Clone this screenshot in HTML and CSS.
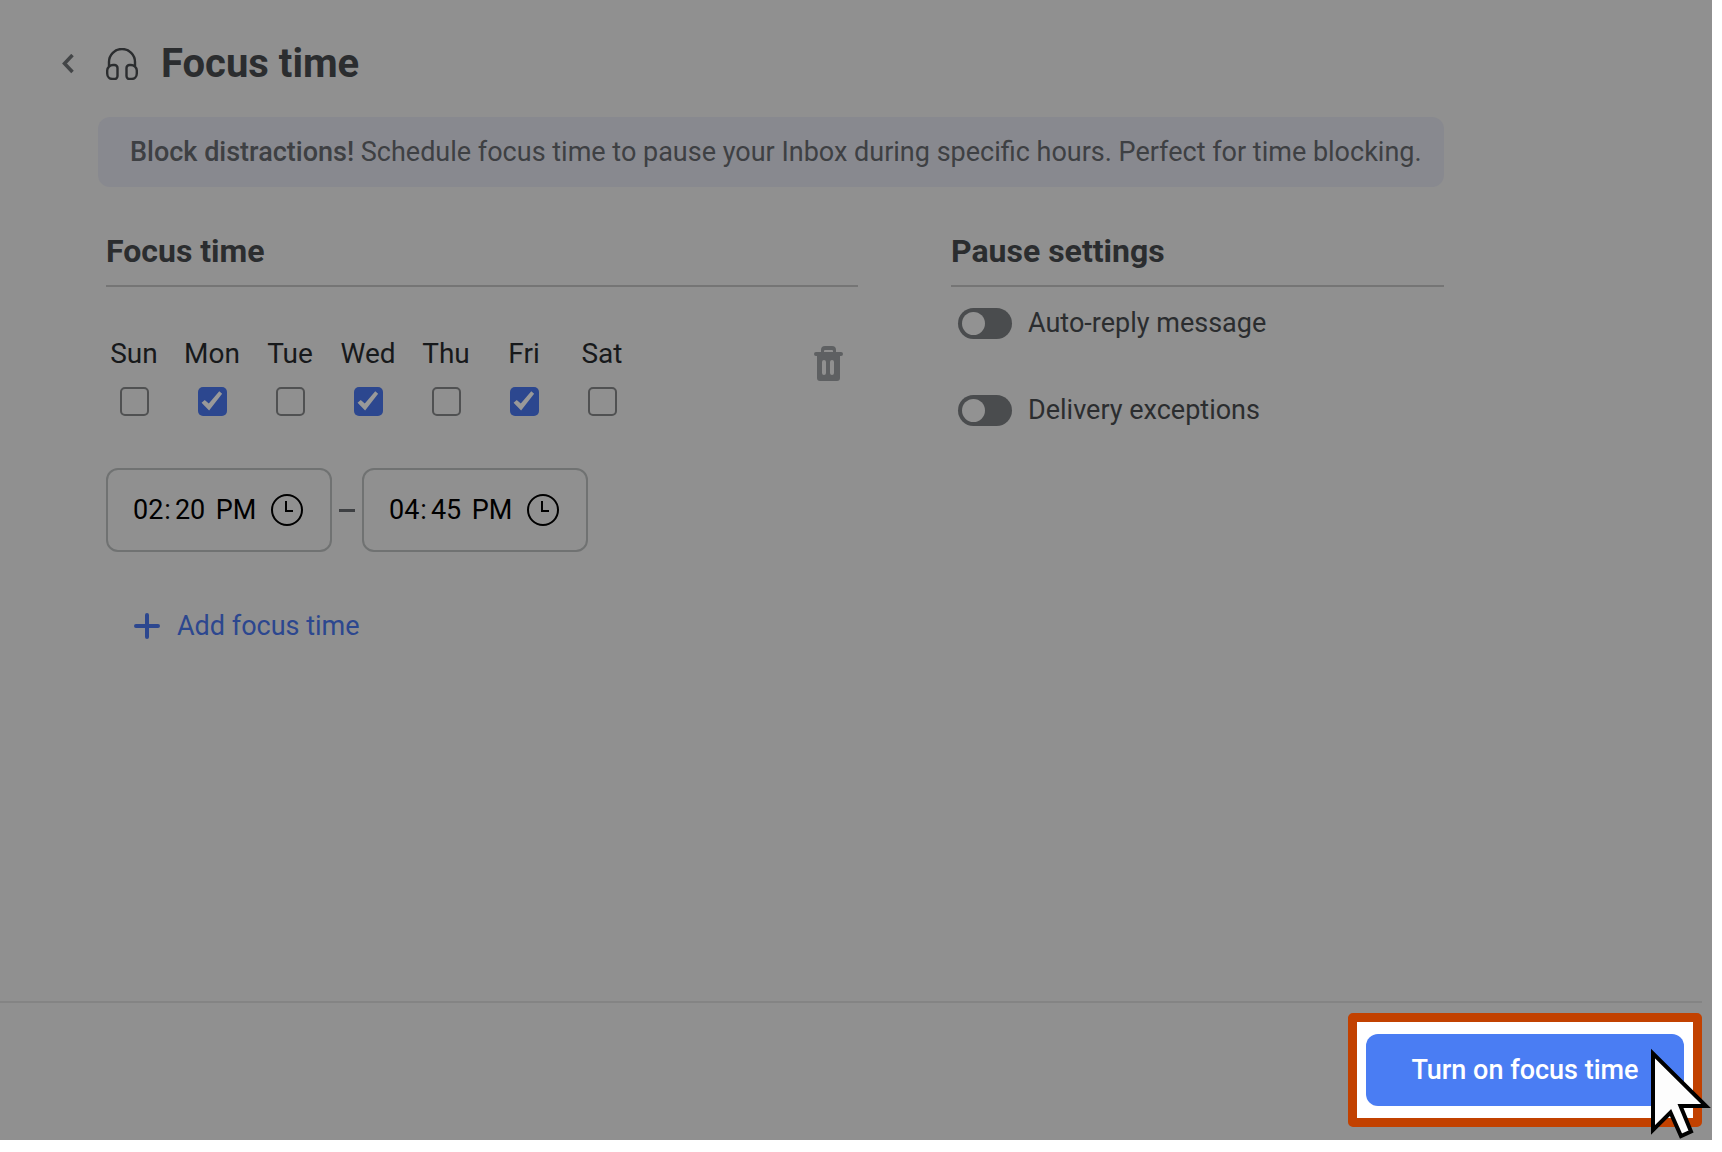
FILE: index.html
```
<!DOCTYPE html>
<html lang="en">
<head>
    <meta charset="UTF-8">
    <meta name="viewport" content="width=device-width, initial-scale=1.0">
    <title>Focus time</title>
    <link rel="stylesheet" href="styles.css">
</head>
<body>

    <div class="panel">
        <header class="header">
            <button class="icon-btn" type="button" aria-label="Back">
                <svg width="12" height="20" viewBox="0 0 12 20" fill="none" stroke="currentColor" stroke-width="3.500"><path d="M10.500 1 2.500 9.500l8 8.500"/></svg>
            </button>
            <svg class="headphones" width="32" height="32" viewBox="0 0 32 32" fill="none" stroke="currentColor" stroke-width="2.400">
                <path d="M3 18V14a13 13 0 0 1 26 0v4"/>
                <path d="M7 17H8.500a3 3 0 0 1 3 3V28a3 3 0 0 1-3 3H6.500C3.500 31 1.200 28.500 1.200 25.500V22.500C1.200 19.500 4 17 7 17Z"/>
                <path d="M25 17H23.500a3 3 0 0 0-3 3V28a3 3 0 0 0 3 3H25.500C28.500 31 30.800 28.500 30.800 25.500V22.500C30.800 19.500 28 17 25 17Z"/>
            </svg>
            <h1>Focus time</h1>
        </header>

        <main class="content">
            <p class="banner"><strong>Block distractions!</strong> Schedule focus time to pause your Inbox during specific hours. Perfect for time blocking.</p>

            <div class="columns">
                <section>
                    <h2>Focus time</h2>
                    <div class="schedule">
                        <div class="days">
                            <label class="day">Sun<input type="checkbox"></label>
                            <label class="day">Mon<input type="checkbox" checked></label>
                            <label class="day">Tue<input type="checkbox"></label>
                            <label class="day">Wed<input type="checkbox" checked></label>
                            <label class="day">Thu<input type="checkbox"></label>
                            <label class="day">Fri<input type="checkbox" checked></label>
                            <label class="day">Sat<input type="checkbox"></label>
                        </div>
                        <button class="icon-btn delete-btn" type="button" aria-label="Delete">
                            <svg width="29" height="36" viewBox="0 0 29 36" fill="currentColor">
                                <path fill-rule="evenodd" d="M7 6V4a4 4 0 0 1 4-4h7a4 4 0 0 1 4 4v2h5a2 2 0 0 1 0 4h-1v22a3 3 0 0 1-3 3H6a3 3 0 0 1-3-3V10H2a2 2 0 0 1 0-4ZM10 6h9V5a1 1 0 0 0-1-1h-7a1 1 0 0 0-1 1ZM8 16v11a2 2 0 0 0 4 0V16a2 2 0 0 0-4 0ZM16 16v11a2 2 0 0 0 4 0V16a2 2 0 0 0-4 0Z"/>
                            </svg>
                        </button>
                    </div>
                    <div class="times">
                        <label class="time-box">
                            <input type="time" value="14:20" aria-label="Start time">
                            <svg width="32" height="32" viewBox="0 0 32 32" fill="none" stroke="currentColor" stroke-width="2"><circle cx="16" cy="16" r="15"/><path d="M15 7v10h7"/></svg>
                        </label>
                        <span class="dash"></span>
                        <label class="time-box">
                            <input type="time" value="16:45" aria-label="End time">
                            <svg width="32" height="32" viewBox="0 0 32 32" fill="none" stroke="currentColor" stroke-width="2"><circle cx="16" cy="16" r="15"/><path d="M15 7v10h7"/></svg>
                        </label>
                    </div>
                    <button class="add-btn" type="button">
                        <svg width="28" height="28" viewBox="0 0 28 28" fill="none" stroke="currentColor" stroke-width="4" stroke-linecap="round"><path d="M14 3v22M3 14h22"/></svg>
                        Add focus time
                    </button>
                </section>

                <section>
                    <h2>Pause settings</h2>
                    <div class="settings">
                        <label class="setting"><input class="switch" type="checkbox" role="switch">Auto-reply message</label>
                        <label class="setting"><input class="switch" type="checkbox" role="switch">Delivery exceptions</label>
                    </div>
                </section>
            </div>
        </main>

        <footer class="footer">
            <div class="highlight">
                <button class="submit-btn" type="button">Turn on focus time</button>
                <svg class="cursor" width="62" height="92" viewBox="0 0 62 92" fill="#fdfdfd" stroke="#000" stroke-width="4">
                    <path d="M3 5.500V82L20.500 64.500 31 88 41 83.500 30.500 58H56Z"/>
                </svg>
            </div>
        </footer>
    </div>

</body>
</html>
```
FILE: styles.css
```
* {
    box-sizing: border-box;
}
body {
    font-family: Roboto, Arial, sans-serif;
    font-size: 27px;
    line-height: 32px;
    margin: 0;
    padding: 0 10px 12px 0;
    background-color: #fff;
    color: #2b2d2f;
}
h1, h2, p {
    margin: 0;
}
button, input {
    font: inherit;
    margin: 0;
}
button {
    border: none;
    cursor: pointer;
}
svg {
    display: block;
    flex-shrink: 0;
}
.panel {
    display: flex;
    flex-direction: column;
    min-height: calc(100vh - 12px);
    background-color: #909090;
}
.header {
    display: flex;
    align-items: center;
    padding: 40px 0 30px 62px;
}
.header h1 {
    font-size: 40px;
    line-height: 47px;
    margin-left: 23px;
}
.icon-btn {
    padding: 0;
    background: none;
    color: #434547;
}
.headphones {
    margin-left: 32px;
}
.content {
    flex: 1;
    max-width: 1444px;
    padding-left: 98px;
}
.banner {
    padding: 18px 20px 18px 32px;
    border-radius: 12px;
    background-color: #88898f;
    color: #3e4043;
    line-height: 34px;
}
.banner strong {
    font-weight: 500;
}
.columns {
    display: grid;
    grid-template-columns: 752fr 493fr;
    gap: 93px;
    padding: 44px 0 0 8px;
}
h2 {
    font-size: 32px;
    line-height: 40px;
    padding-bottom: 14px;
    border-bottom: 2px solid #757575;
}
.schedule {
    display: flex;
    justify-content: space-between;
    align-items: flex-start;
    padding: 51px 15px 0 0;
}
.days {
    display: flex;
    margin-left: -11px;
}
.day {
    display: flex;
    flex-direction: column;
    align-items: center;
    gap: 17px;
    width: 78px;
    font-size: 28px;
    color: #17191b;
}
.day input {
    appearance: none;
    width: 29px;
    height: 29px;
    border: 2px solid #505152;
    border-radius: 5px;
}
.day input:checked {
    border: none;
    background-color: #2c478f;
}
.day input:checked::after {
    content: "";
    display: block;
    height: 100%;
    background-color: #999;
    clip-path: polygon(14% 54%, 25% 45%, 39% 57%, 75% 15%, 85% 23%, 40% 81%);
}
.delete-btn {
    color: #5e6062;
    margin-top: 8px;
}
.times {
    display: flex;
    align-items: center;
    gap: 7px;
    margin-top: 52px;
}
.time-box {
    display: flex;
    align-items: center;
    justify-content: space-between;
    width: 226px;
    height: 84px;
    padding: 0 27px 0 24px;
    border: 2px solid #707272;
    border-radius: 12px;
    color: #000;
}
.time-box input {
    width: 132px;
    border: none;
    padding: 0;
    background: none;
    color: #000;
}
.time-box input::-webkit-datetime-edit-minute-field {
    padding-left: 4px;
}
.time-box input::-webkit-datetime-edit-ampm-field {
    padding-left: 6px;
}
.time-box input::-webkit-calendar-picker-indicator {
    display: none;
}
.dash {
    width: 16px;
    height: 3px;
    background-color: #3e4043;
}
.add-btn {
    display: flex;
    align-items: center;
    gap: 16px;
    margin-top: 58px;
    padding: 0 27px;
    background: none;
    color: #2c478f;
}
.settings {
    display: flex;
    flex-direction: column;
    gap: 55px;
    padding: 20px 7px;
}
.setting {
    display: flex;
    align-items: center;
    gap: 16px;
}
.switch {
    appearance: none;
    display: flex;
    width: 54px;
    height: 31px;
    padding: 4px;
    border-radius: 16px;
    background-color: #4a4c4e;
}
.switch::before {
    content: "";
    width: 23px;
    height: 23px;
    border-radius: 50%;
    background-color: #929292;
}
.switch:checked {
    justify-content: flex-end;
    background-color: #2c478f;
}
.footer {
    display: flex;
    justify-content: flex-end;
    margin-right: 10px;
    padding: 10px 0 13px;
    border-top: 2px solid #848484;
}
.highlight {
    position: relative;
    padding: 12px 9px;
    border: 9px solid #c24100;
    border-radius: 5px;
    background-color: #fff;
}
.submit-btn {
    width: 318px;
    height: 72px;
    border-radius: 12px;
    background-color: #4a7df3;
    color: #fff;
    font-weight: 500;
}
.cursor {
    position: absolute;
    right: -19px;
    bottom: -22px;
}
```
